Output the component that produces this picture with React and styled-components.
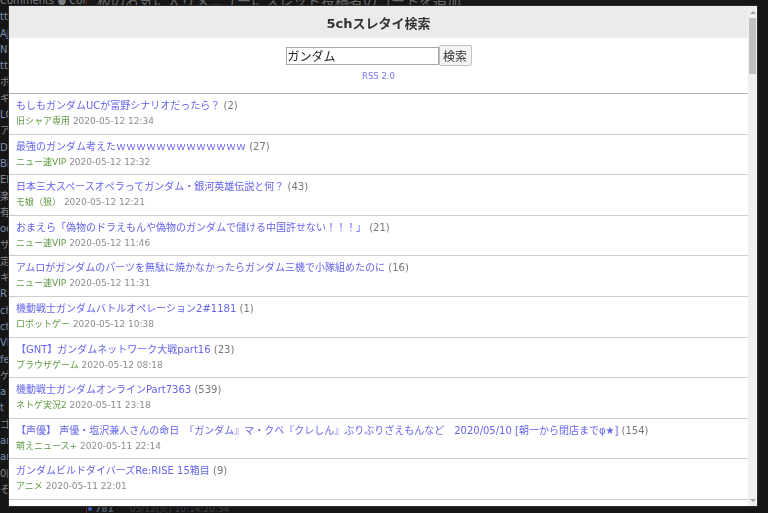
import React from "react";
import styled, { createGlobalStyle } from "styled-components";

const Global = createGlobalStyle`
  html, body { margin: 0; padding: 0; background: #151515; overflow: hidden; }
  #root { height: 100vh; }
  * { box-sizing: border-box; }
`;

const FONT = `"DejaVu Sans", "Noto Sans CJK JP", sans-serif`;

/* ---------- background page (behind the dialog) ---------- */
const Page = styled.div`
  display: flex;
  height: 100vh;
  font-family: ${FONT};
  background: #161616;
  overflow: hidden;
`;

const Sidebar = styled.nav`
  width: 87px;
  flex: none;
  border-right: 1px solid #6e2222;
  display: flex;
  flex-direction: column;
  margin-top: -7px;
  overflow: hidden;
`;

const SideItem = styled.div`
  font-size: 10px;
  line-height: 16.3px;
  white-space: nowrap;
  color: ${(p) => p.$c};
`;

const Main = styled.main`
  flex: 1;
  display: flex;
  flex-direction: column;
  justify-content: space-between;
  padding-left: 10px;
`;

const MainTitle = styled.h1`
  margin: -8px 0 0;
  font-size: 14px;
  font-weight: normal;
  line-height: 18px;
  color: #6a6a6a;
`;

const PostRow = styled.div`
  display: flex;
  align-items: center;
  gap: 16px;
  margin: 0 0 -3px -9px;
  font-size: 9px;
  line-height: 14px;
  color: #3a3e48;
`;

const PostNo = styled.span`
  display: flex;
  align-items: center;
  gap: 3px;
  color: #4d5666;
  font-weight: bold;
  &::before {
    content: "";
    width: 4px;
    height: 4px;
    border-radius: 50%;
    background: #2e5fa8;
  }
`;

/* ---------- dialog ---------- */
const Dialog = styled.div`
  position: fixed;
  top: 6px;
  left: 9px;
  width: 748px;
  height: 500px;
  display: flex;
  background: #fff;
  font-family: ${FONT};
  box-shadow: 0 0 0 1px #2c2c2c;
`;

const Scroller = styled.div`
  flex: 1;
  min-width: 0;
  overflow-y: auto;
  scrollbar-width: none;
  &::-webkit-scrollbar { display: none; }
`;

const ScrollTrack = styled.div`
  width: 9px;
  flex: none;
  display: flex;
  flex-direction: column;
  background: #f0f0f0;
`;

const ScrollArrow = styled.div`
  height: 12px;
  display: flex;
  align-items: center;
  justify-content: center;
  margin-top: ${(p) => (p.$down ? "auto" : "0")};
  &::before {
    content: "";
    border-left: 3px solid transparent;
    border-right: 3px solid transparent;
    ${(p) =>
      p.$down
        ? "border-top: 3px solid #a3a3a3;"
        : "border-bottom: 3px solid #a3a3a3;"}
  }
`;

const ScrollThumb = styled.div`
  height: 56px;
  margin: 0 1px;
  background: #c1c1c1;
`;

const Header = styled.header`
  height: 32px;
  background: #ebebeb;
  display: flex;
  align-items: center;
  justify-content: center;
  font-size: 13px;
  font-weight: bold;
  color: #333;
`;

const SearchArea = styled.section`
  display: flex;
  flex-direction: column;
  align-items: center;
  padding: 7px 0 11px;
  border-bottom: 1px solid #b4b4b4;
`;

const SearchForm = styled.form`
  display: flex;
  align-items: center;
  height: 21px;
`;

const SearchInput = styled.input`
  width: 153px;
  height: 18px;
  padding: 0 1px;
  border: 1px solid #a8a8a8;
  font-family: ${FONT};
  font-size: 12px;
  color: #222;
  outline: none;
`;

const SearchButton = styled.button`
  width: 33px;
  height: 21px;
  padding: 0;
  border: 1px solid #c2c2c2;
  border-radius: 2px;
  background: #f3f3f3;
  font-family: ${FONT};
  font-size: 12px;
  color: #333;
`;

const RssLink = styled.a`
  margin-top: 4px;
  font-size: 8.5px;
  line-height: 12px;
  color: #7272f2;
  text-decoration: none;
`;

const List = styled.ul`
  list-style: none;
  margin: 0;
  padding: 0;
`;

const Item = styled.li`
  padding: 4px 7px 4.6px;
  border-bottom: 1px solid #cdcdcd;
  white-space: nowrap;
  overflow: hidden;
`;

const TitleLine = styled.div`
  font-size: 10px;
  line-height: 15px;
`;

const TitleLink = styled.a`
  color: #6464ee;
  text-decoration: none;
`;

const Count = styled.span`
  color: #777;
`;

const Meta = styled.div`
  font-size: 9px;
  line-height: 16px;
  color: #8c8c8c;
`;

const Board = styled.span`
  color: #5e9a42;
`;

const sideItems = [
  ["Comments ● Commit", "#7e7e7e"],
  ["ttodo管理", "#7d8fa8"],
  ["AJAX", "#7d8fa8"],
  ["NWニュース", "#7d8fa8"],
  ["tter連携", "#7d8fa8"],
  ["ボード一覧", "#8a8a8a"],
  ["ギオン", "#8a8a8a"],
  ["LGBT", "#7d8fa8"],
  ["アプリ", "#8a8a8a"],
  ["Docs", "#7d8fa8"],
  ["Bird", "#7d8fa8"],
  ["EIJI", "#8a8a8a"],
  ["楽天市場", "#8a8a8a"],
  ["有害情報", "#8a8a8a"],
  ["oodle", "#7d8fa8"],
  ["ザウルス", "#8a8a8a"],
  ["定着板", "#8a8a8a"],
  ["キャッシュ", "#8a8a8a"],
  ["Rボード", "#7d8fa8"],
  ["chart", "#7d8fa8"],
  ["ctrl", "#7d8fa8"],
  ["VIP", "#7d8fa8"],
  ["feed", "#7d8fa8"],
  ["ゲーム", "#8a8a8a"],
  ["a", "#7d8fa8"],
  ["t", "#7d8fa8"],
  ["ゴコ", "#8a8a8a"],
  ["amazon", "#7d8fa8"],
  ["amiibo", "#7d8fa8"],
  ["0廊下", "#8a8a8a"],
  ["その他", "#8a8a8a"],
];

const results = [
  { t: "もしもガンダムUCが富野シナリオだったら？", n: 2, b: "旧シャア専用", d: "2020-05-12 12:34" },
  { t: "最強のガンダム考えたｗｗｗｗｗｗｗｗｗｗｗｗｗ", n: 27, b: "ニュー速VIP", d: "2020-05-12 12:32" },
  { t: "日本三大スペースオペラってガンダム・銀河英雄伝説と何？", n: 43, b: "モ娘（狼）", d: "2020-05-12 12:21" },
  { t: "おまえら「偽物のドラえもんや偽物のガンダムで儲ける中国許せない！！！」", n: 21, b: "ニュー速VIP", d: "2020-05-12 11:46" },
  { t: "アムロがガンダムのパーツを無駄に焼かなかったらガンダム三機で小隊組めたのに", n: 16, b: "ニュー速VIP", d: "2020-05-12 11:31" },
  { t: "機動戦士ガンダムバトルオペレーション2#1181", n: 1, b: "ロボットゲー", d: "2020-05-12 10:38" },
  { t: "【GNT】ガンダムネットワーク大戦part16", n: 23, b: "ブラウザゲーム", d: "2020-05-12 08:18" },
  { t: "機動戦士ガンダムオンラインPart7363", n: 539, b: "ネトゲ実況2", d: "2020-05-11 23:18" },
  { t: "【声優】 声優・塩沢兼人さんの命日　『ガンダム』マ・クベ『クレしん』ぶりぶりざえもんなど　2020/05/10 [朝一から閉店までφ★]", n: 154, b: "萌えニュース+", d: "2020-05-11 22:14" },
  { t: "ガンダムビルドダイバーズRe:RISE 15箱目", n: 9, b: "アニメ", d: "2020-05-11 22:01" },
];

/* the search returns about a hundred threads; only the first ten are in view */
const allResults = Array.from({ length: 102 }, (_, i) => results[i % results.length]);

export default function App() {
  return (
    <>
      <Global />
      <Page>
        <Sidebar>
          {sideItems.map(([t, c], i) => (
            <SideItem key={i} $c={c}>{t}</SideItem>
          ))}
        </Sidebar>
        <Main>
          <MainTitle>板のお気に入りメニューにスレッド投稿者のコートを追加</MainTitle>
          <PostRow>
            <PostNo>781</PostNo>
            <span>05/12(火) 10:14:20.54</span>
          </PostRow>
        </Main>
      </Page>

      <Dialog>
        <Scroller>
          <Header>5chスレタイ検索</Header>
          <SearchArea>
            <SearchForm onSubmit={(e) => e.preventDefault()}>
              <SearchInput defaultValue="ガンダム" />
              <SearchButton type="submit">検索</SearchButton>
            </SearchForm>
            <RssLink href="#">RSS 2.0</RssLink>
          </SearchArea>
          <List>
            {allResults.map((r, i) => (
              <Item key={i}>
                <TitleLine>
                  <TitleLink href="#">{r.t}</TitleLink> <Count>({r.n})</Count>
                </TitleLine>
                <Meta>
                  <Board>{r.b}</Board> {r.d}
                </Meta>
              </Item>
            ))}
          </List>
        </Scroller>
        <ScrollTrack>
          <ScrollArrow />
          <ScrollThumb />
          <ScrollArrow $down />
        </ScrollTrack>
      </Dialog>
    </>
  );
}
